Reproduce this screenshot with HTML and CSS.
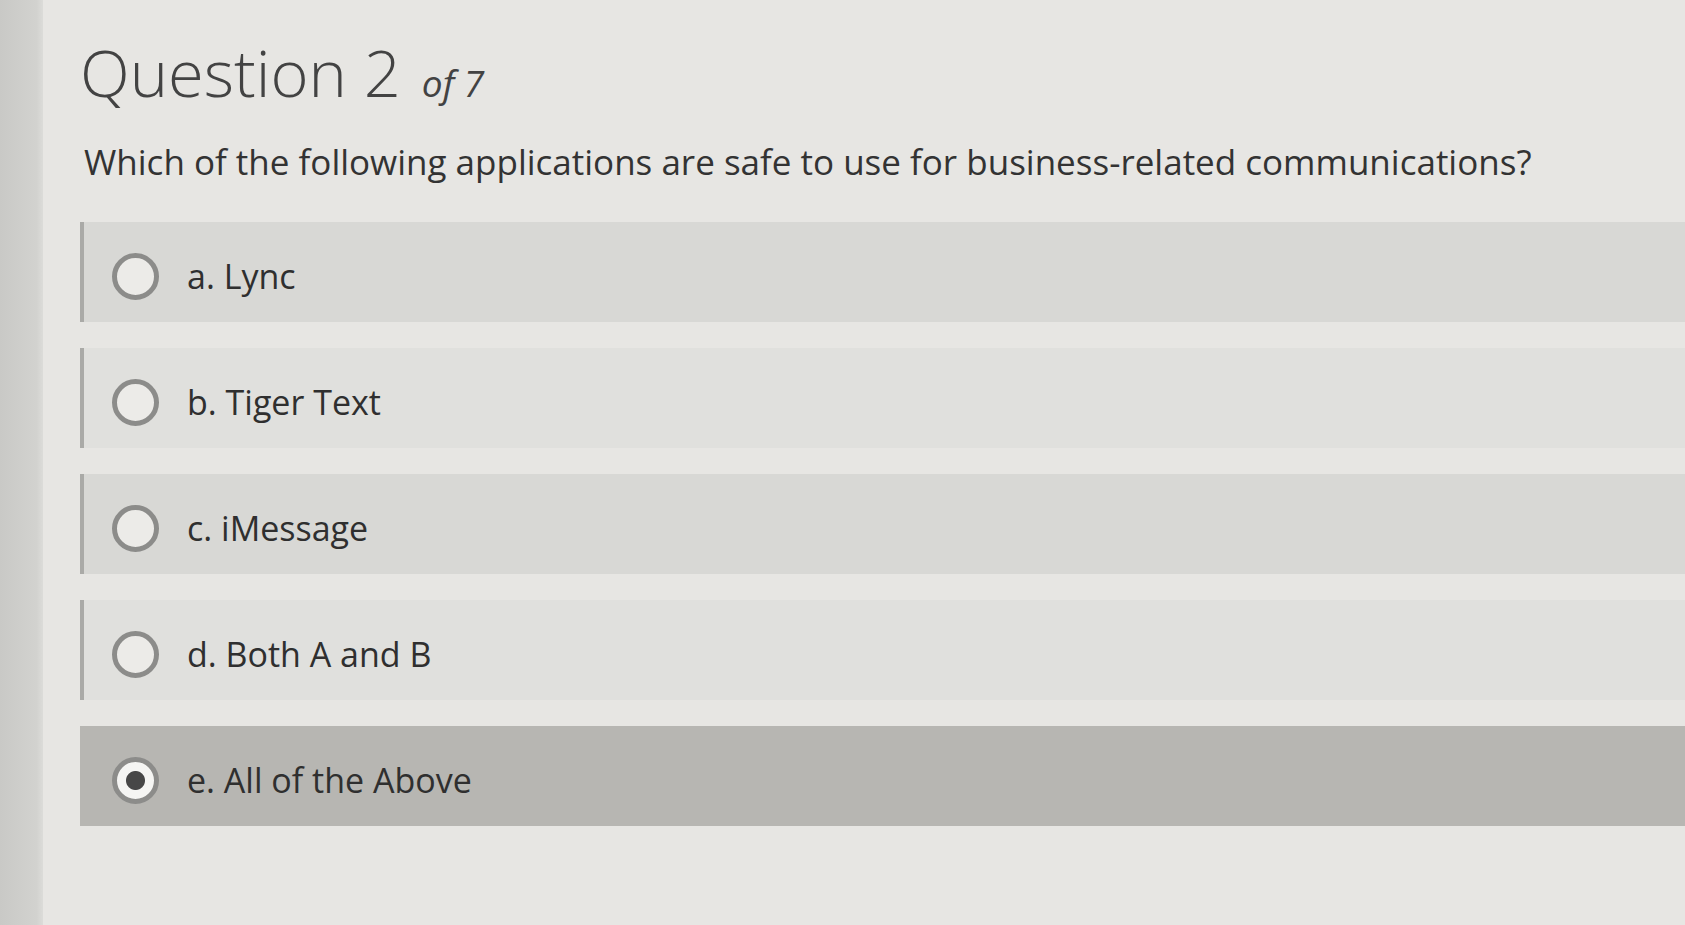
FILE: index.html
```html
<!DOCTYPE html>
<html lang="en">
  <head>
    <meta charset="UTF-8" />
    <meta name="viewport" content="width=device-width, initial-scale=1.0" />
    <title>Question 2 of 7</title>
    <link rel="stylesheet" href="styles.css">
  </head>

  <body>
    <div class="screen">
      <!-- side rail -->
      <aside class="rail"></aside>

      <!-- question + answers -->
      <main class="quiz">
        <h1 class="q-title">Question 2 <span class="q-count">of 7</span></h1>
        <p class="q-text">Which of the following applications are safe to use for business-related communications?</p>

        <form class="answers">
          <label class="answer">
            <input type="radio" name="q2" value="a" />
            <span>a. Lync</span>
          </label>
          <label class="answer">
            <input type="radio" name="q2" value="b" />
            <span>b. Tiger Text</span>
          </label>
          <label class="answer">
            <input type="radio" name="q2" value="c" />
            <span>c. iMessage</span>
          </label>
          <label class="answer">
            <input type="radio" name="q2" value="d" />
            <span>d. Both A and B</span>
          </label>
          <label class="answer valgt">
            <input type="radio" name="q2" value="e" checked />
            <span>e. All of the Above</span>
          </label>
        </form>
      </main>
    </div>
  </body>
</html>
```

FILE: styles.css
```css
body {
  margin: 0;
  background-color: #e7e6e3;
  font-family: "Open Sans", "Liberation Sans", sans-serif;
  color: #333;
  overflow: hidden;
}
.screen {
  display: flex;
  min-height: 100vh;
}
.rail {
  width: 43px;
  flex-shrink: 0;
  background: linear-gradient(to right, #c9c9c6, #d2d2cf 85%, #dcdcd9);
}
.quiz {
  flex: 1;
  padding: 33px 0 0 37px;
}
.q-title {
  margin: 0 0 29px 0;
  font-size: 65px;
  font-weight: 300;
  line-height: 78px;
  color: #434343;
}
/* "of 7" sits on the title baseline without growing the line */
.q-count {
  font-size: 37px;
  font-style: italic;
  font-weight: 400;
  line-height: 1;
  margin-left: 4px;
}
.q-text {
  margin: 0 0 38px 4px;
  font-size: 35px;
  font-weight: 500;
  line-height: 44px;
  color: #333;
}
.answers {
  display: flex;
  flex-direction: column;
  gap: 26px;
}
.answer {
  display: flex;
  align-items: center;
  gap: 28px;
  height: 100px;
  box-sizing: border-box;
  padding: 8px 0 0 28px;
  border-left: 4px solid #aaaaa7;
  background-color: #e0e0dd;
  font-size: 34px;
  font-weight: 500;
  color: #2f2f2f;
  cursor: pointer;
}
.answer:nth-child(odd) {
  background-color: #d8d8d5;
}
.answer.valgt {
  background-color: #b7b6b2;
  border-left-color: #b7b6b2;
}
.answer input {
  appearance: none;
  -webkit-appearance: none;
  margin: 0;
  width: 47px;
  height: 47px;
  flex-shrink: 0;
  box-sizing: border-box;
  border: 5px solid #8c8c8a;
  border-radius: 50%;
  background-color: #ecebe8;
}
.answer input:checked {
  background: radial-gradient(circle, #474747 0 9px, #f5f5f3 10px);
}
```
